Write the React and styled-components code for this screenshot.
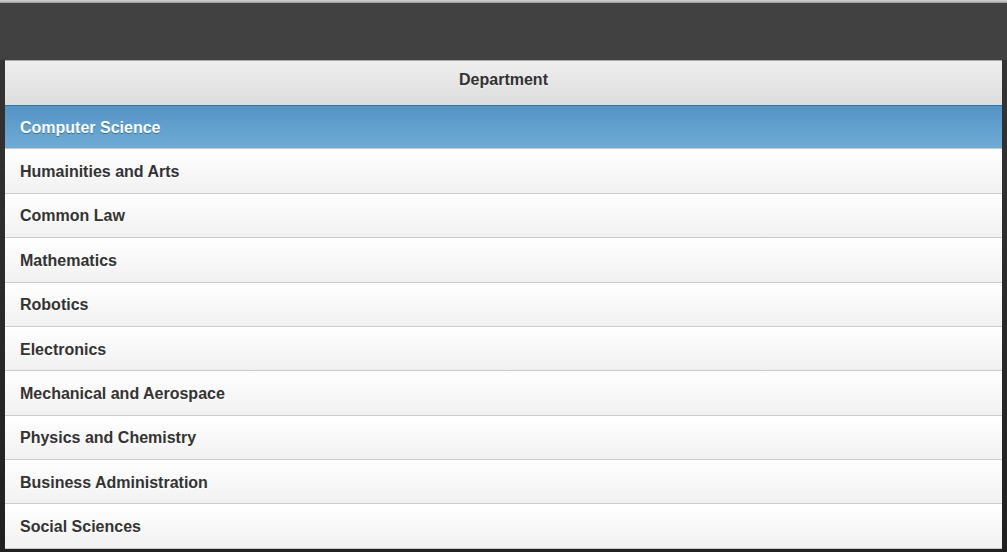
import React from "react";
import styled, { createGlobalStyle } from "styled-components";

const GlobalStyle = createGlobalStyle`
  html, body { margin: 0; padding: 0; }
  body {
    background: #222;
    font-family: "Liberation Sans", Arial, Helvetica, sans-serif;
  }
`;

const Frame = styled.div`
  width: 1007px;
  height: 552px;
  display: flex;
  flex-direction: column;
  overflow: hidden;
  background: linear-gradient(#363636, #202020);
`;

const TopEdge = styled.div`
  height: 3px;
  flex: none;
  background: linear-gradient(#d4d4d4, #9a9a9a);
`;

const TopBar = styled.div`
  height: 57px;
  flex: none;
  background: #414141;
`;

const Panel = styled.div`
  margin: 0 5px;
  display: flex;
  flex-direction: column;
`;

const Header = styled.div`
  height: 38px;
  padding-bottom: 6px;
  border-top: 1px solid #a8a8a8;
  background: linear-gradient(#eeeeee, #dddddd);
  display: flex;
  align-items: center;
  justify-content: center;
  color: #333;
  font-size: 16px;
  font-weight: bold;
  text-shadow: 0 1px 0 #eee;
`;

const List = styled.ul`
  list-style: none;
  margin: 0;
  padding: 0;
`;

const Item = styled.li`
  padding: 11.2px 15px;
  line-height: 21px;
  font-size: 16px;
  font-weight: bold;
  border-bottom: 1px solid ${(p) => (p.$active ? "#c8c8c8" : "#cccccc")};
  border-top: ${(p) => (p.$active ? "1px solid #2f76ad" : "none")};
  padding-top: ${(p) => (p.$active ? "10.7px" : "11.7px")};
  padding-bottom: 10.7px;
  color: ${(p) => (p.$active ? "#fff" : "#333")};
  text-shadow: ${(p) => (p.$active ? "0 1px 0 #3373a5" : "0 1px 0 #fff")};
  background: ${(p) =>
    p.$active
      ? "linear-gradient(#5393c5, #6facd5)"
      : "linear-gradient(#ffffff, #f1f1f1)"};
`;

const departments = [
  "Computer Science",
  "Humainities and Arts",
  "Common Law",
  "Mathematics",
  "Robotics",
  "Electronics",
  "Mechanical and Aerospace",
  "Physics and Chemistry",
  "Business Administration",
  "Social Sciences",
];

export default function App() {
  return (
    <>
      <GlobalStyle />
      <Frame>
        <TopEdge />
        <TopBar />
        <Panel>
          <Header>Department</Header>
          <List>
            {departments.map((d, i) => (
              <Item key={d} $active={i === 0}>
                {d}
              </Item>
            ))}
          </List>
        </Panel>
      </Frame>
    </>
  );
}
